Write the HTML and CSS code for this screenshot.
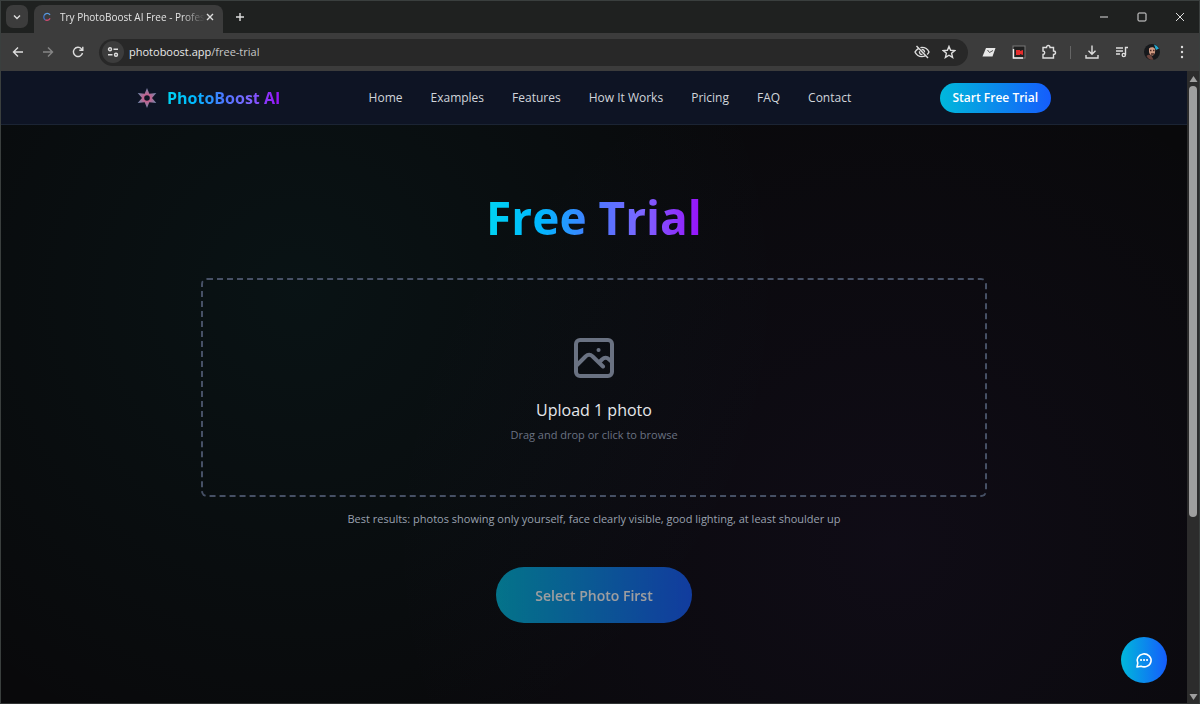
FILE: index.html
```html
<!DOCTYPE html>
<html lang="en">
<head>
  <meta charset="utf-8">
  <title>Try PhotoBoost AI Free</title>
  <link rel="stylesheet" href="styles.css">
</head>
<body>
  <div class="window">
    <div class="tab-strip">
      <button class="tab-search" aria-label="Search tabs">
        <svg width="10" height="10" viewBox="0 0 10 10"><path d="M2 3.5l3 3 3-3"/></svg>
      </button>
      <div class="tab">
        <svg class="favicon" width="10" height="10" viewBox="0 0 10 10">
          <path d="M8 3A3.2 3.2 0 0 0 2.2 3.4" stroke="#5a9be0"/>
          <path d="M2.2 3.4A3.2 3.2 0 0 0 3.4 7.8" stroke="#3f6fc4"/>
          <path d="M3.4 7.8A3.2 3.2 0 0 0 8 6.2" stroke="#c44a6c"/>
        </svg>
        <span class="tab-title">Try PhotoBoost AI Free - Profes</span>
        <button class="tab-close" aria-label="Close tab">
          <svg width="10" height="10" viewBox="0 0 10 10"><path d="M2 2l6 6M8 2L2 8"/></svg>
        </button>
      </div>
      <button class="new-tab" aria-label="New tab">
        <svg width="12" height="12" viewBox="0 0 12 12"><path d="M6 2v8M2 6h8"/></svg>
      </button>
      <div class="window-controls">
        <button aria-label="Minimize"><svg width="12" height="12" viewBox="0 0 12 12"><path d="M2 6h8"/></svg></button>
        <button aria-label="Maximize"><svg width="12" height="12" viewBox="0 0 12 12"><rect x="2" y="2" width="8" height="8" rx="1"/></svg></button>
        <button aria-label="Close"><svg width="12" height="12" viewBox="0 0 12 12"><path d="M2 2l8 8M10 2l-8 8"/></svg></button>
      </div>
    </div>

    <div class="toolbar">
      <button class="tool" aria-label="Back">
        <svg width="14" height="14" viewBox="0 0 14 14"><path d="M12 7H2.5M7 2.5L2.5 7 7 11.5"/></svg>
      </button>
      <button class="tool" aria-label="Forward" disabled>
        <svg width="14" height="14" viewBox="0 0 14 14"><path d="M2 7h9.5M7 2.5L11.5 7 7 11.5"/></svg>
      </button>
      <button class="tool" aria-label="Reload">
        <svg width="14" height="14" viewBox="0 0 14 14"><path d="M11.5 8A4.6 4.6 0 1 1 10.5 3.9L11.6 5M11.8 1.8V5.3H8.3"/></svg>
      </button>

      <div class="address-bar">
        <button class="site-info" aria-label="Site information">
          <svg width="12" height="12" viewBox="0 0 12 12"><circle cx="3" cy="3.3" r="1.5"/><path d="M6.5 3.3H11M1 8.7h4.5"/><circle cx="9" cy="8.7" r="1.5"/></svg>
        </button>
        <div class="url">photoboost.app<span>/free-trial</span></div>
        <button class="address-action" aria-label="Tracking blocked">
          <svg width="16" height="16" viewBox="0 0 16 16"><path d="M4.3 4.6C2.8 5.5 1.6 6.8 1 8c1.2 2.6 3.9 4.600 7 4.600 1.100 0 2.200-.3 3.200-.7M6.400 3.600C6.900 3.500 7.400 3.400 8 3.400c3.100 0 5.800 2 7 4.600-.4.900-1 1.800-1.900 2.500M2.500 2l11.500 12M7.600 5.500A2.500 2.500 0 0 1 10.500 8.400M5.600 7.300A2.500 2.500 0 0 0 8.500 10.500"/></svg>
        </button>
        <button class="address-action" aria-label="Bookmark">
          <svg width="14" height="14" viewBox="0 0 14 14"><path d="M7 1.400l1.600 3.900 4.200.3-3.200 2.700 1 4.100L7 10.200l-3.600 2.200 1-4.100L1.200 5.600l4.200-.3z"/></svg>
        </button>
      </div>

      <button class="tool" aria-label="Mail extension">
        <svg width="14" height="14" viewBox="0 0 14 14"><path d="M4 3h9.500l-3 8.500H.5z" fill="#e8e8e8" stroke="none"/><path d="M5.500 5l2 2.500L11 5.500" stroke="#555" stroke-width="1"/></svg>
      </button>
      <button class="tool" aria-label="Recorder extension">
        <svg width="14" height="14" viewBox="0 0 14 14"><rect x="1" y="1" width="12" height="12" fill="#202020" stroke="#777" stroke-width="1"/><path d="M1.500 4v9H11" stroke="#f0f0f0"/><path d="M4 5h4v1l3-1v5L8 9v1H4z" fill="#e52d2d" stroke="none"/></svg>
      </button>
      <button class="tool" aria-label="Extensions">
        <svg width="16" height="16" viewBox="0 0 16 16"><path d="M2 3.500h3.500C5.500.8 9 .8 9 3.500h3.500V7c2.700 0 2.700 3.500 0 3.500V14H2v-3.500c2.300-.2 2.300-3.300 0-3.500z"/></svg>
      </button>
      <span class="separator"></span>
      <button class="tool" aria-label="Downloads">
        <svg width="16" height="16" viewBox="0 0 16 16"><path d="M8 1.500V10M4.500 6.800L8 10.300l3.500-3.500M2 11v3h12v-3"/></svg>
      </button>
      <button class="tool" aria-label="Media controls">
        <svg width="16" height="16" viewBox="0 0 16 16"><path d="M2 4h7M2 7h7M2 10h4M11.500 11V3.500H14"/><circle cx="9.800" cy="11" r="1.600"/></svg>
      </button>
      <button class="tool" aria-label="Profile">
        <svg class="avatar" width="16" height="16" viewBox="0 0 16 16">
          <circle cx="8" cy="8" r="8" fill="#17191c"/>
          <path d="M10 .5a8 8 0 0 1 5 4L12 6z" fill="#25a8cf"/>
          <path d="M5 4.500c2-1.800 5-1.500 6 .5.500 2.500 0 5-2 6.500-2 .5-3.500-1-4-3.500z" fill="#d39b82"/>
          <path d="M6 6.500h1.500M9 6.500h1.500M7 10h3" stroke="#4a2a24"/>
          <path d="M2.500 12c2-2 3.500-1.500 5 0l2 3.500c-3 1-5.500-.5-7-3.500z" fill="#6b443d"/>
        </svg>
      </button>
      <button class="tool" aria-label="Menu">
        <svg width="14" height="14" viewBox="0 0 14 14"><g fill="#dedede" stroke="none"><circle cx="7" cy="2" r="1.200"/><circle cx="7" cy="7" r="1.200"/><circle cx="7" cy="12" r="1.200"/></g></svg>
      </button>
    </div>

    <div class="viewport">
      <div class="page">
        <header class="site-header">
          <div class="header-inner">
            <a class="brand" href="#">
              <svg width="20" height="20" viewBox="0 0 20 20">
                <defs>
                  <radialGradient id="star" cx="10" cy="10" r="10" gradientUnits="userSpaceOnUse">
                    <stop offset=".35" stop-color="#c2628e"/>
                    <stop offset="1" stop-color="#7089ad"/>
                  </radialGradient>
                </defs>
                <path fill="url(#star)" fill-rule="evenodd" d="M10 0l2.300 5.800 7-.8-4.300 5 4.300 5-7-.8L10 20l-2.300-5.800-7 .8L5 10 .7 5l7 .8zM10 7.200a2.800 2.800 0 1 0 0 5.600 2.800 2.800 0 0 0 0-5.600z"/>
              </svg>
              <span class="brand-name">PhotoBoost AI</span>
            </a>
            <nav class="nav">
              <a href="#">Home</a>
              <a href="#">Examples</a>
              <a href="#">Features</a>
              <a href="#">How It Works</a>
              <a href="#">Pricing</a>
              <a href="#">FAQ</a>
              <a href="#">Contact</a>
            </nav>
            <button class="trial-btn">Start Free Trial</button>
          </div>
        </header>

        <main class="trial">
          <h1>Free Trial</h1>
          <button class="dropzone">
            <svg width="40" height="40" viewBox="0 0 40 40">
              <rect x="2" y="2" width="36" height="36" rx="4"/>
              <path d="M2 28l9.500-9.500c2.400-2.300 4.800-2.300 7.200 0L29 28.500M25 24.500l3-3c2.400-2.300 4.800-2.300 7.200 0L38 24M24.500 12h.1"/>
            </svg>
            <span class="upload-title">Upload 1 photo</span>
            <span class="upload-hint">Drag and drop or click to browse</span>
          </button>
          <p class="tips">Best results: photos showing only yourself, face clearly visible, good lighting, at least shoulder up</p>
          <button class="submit-btn" disabled>Select Photo First</button>
        </main>

        <button class="chat-btn" aria-label="Open chat">
          <svg width="18" height="18" viewBox="0 0 18 18">
            <path d="M2 16l.8-3.800A7 6.500 0 1 1 6 15.200z"/>
            <path d="M6 9h.1M9 9h.1M12 9h.1" stroke-width="2"/>
          </svg>
        </button>
      </div>
      <div class="scrollbar">
        <svg width="9" height="8" viewBox="0 0 9 8"><path d="M4.500 1L8.500 7H.5z"/></svg>
        <div class="track"><div class="thumb"></div></div>
        <svg width="9" height="8" viewBox="0 0 9 8"><path d="M4.500 7L8.500 1H.5z"/></svg>
      </div>
    </div>
  </div>
</body>
</html>
```
FILE: styles.css
```css
* {
  box-sizing: border-box;
}

body {
  margin: 0;
  font-family: "Open Sans", "Noto Sans", sans-serif;
  font-size: 12px;
  background: #1f2120;
  color: #d1d5db;
}

button {
  padding: 0;
  border: none;
  background: none;
  color: inherit;
  font-family: inherit;
  cursor: pointer;
}

a {
  color: inherit;
  text-decoration: none;
}

svg {
  display: block;
  flex-shrink: 0;
  fill: none;
}

.window {
  display: flex;
  flex-direction: column;
  min-height: 100vh;
  border: 1px solid #3a3f3e;
  border-bottom-color: #303333;
}

/* Tab strip */
.tab-strip {
  display: flex;
  height: 32px;
  padding: 4px 0 0 5px;
  background: #1f2120;
}

.tab-strip svg,
.toolbar svg {
  stroke: #dedede;
  stroke-width: 1.4;
}

.tab-search {
  display: flex;
  align-items: center;
  justify-content: center;
  width: 22px;
  height: 23px;
  border-radius: 7px;
  background: #3c3c3c;
}

.tab {
  display: flex;
  align-items: center;
  width: 189px;
  margin-left: 6px;
  padding: 0 8px;
  border-radius: 8px 8px 0 0;
  background: #3c3c3c;
}

.tab-title {
  flex: 1;
  margin: 0 0 4px 8px;
  overflow: hidden;
  white-space: nowrap;
  font-size: 10px;
  line-height: 14px;
  color: #e3e3e3;
  -webkit-mask-image: linear-gradient(90deg, #000 84%, transparent);
  mask-image: linear-gradient(90deg, #000 84%, transparent);
}

.favicon,
.tab-close {
  margin-bottom: 4px;
}

.new-tab {
  display: flex;
  align-items: center;
  justify-content: center;
  width: 22px;
  height: 23px;
  margin-left: 6px;
}

.window-controls {
  display: flex;
  margin-left: auto;
}

.window-controls button {
  display: flex;
  align-items: center;
  justify-content: center;
  width: 38px;
  height: 23px;
}

.window-controls svg {
  stroke-width: 1;
}

/* Toolbar */
.toolbar {
  display: flex;
  align-items: center;
  height: 38px;
  padding: 0 2px;
  background: #3c3c3c;
}

.tool {
  display: flex;
  align-items: center;
  justify-content: center;
  width: 30px;
  height: 28px;
}

.tool:disabled {
  opacity: 0.45;
}

.toolbar .avatar {
  stroke: none;
}

.separator {
  width: 1px;
  height: 13px;
  margin: 0 6px;
  background: #656565;
}

.address-bar {
  display: flex;
  flex: 1;
  align-items: center;
  height: 27px;
  margin: 0 6px;
  padding: 0 6px 0 3px;
  border-radius: 14px;
  background: #282828;
}

.site-info {
  display: flex;
  align-items: center;
  justify-content: center;
  width: 22px;
  height: 22px;
  border-radius: 50%;
  background: #3c3c3c;
}

.url {
  flex: 1;
  margin-left: 5px;
  font-size: 11px;
  line-height: 16px;
  color: #e8e8e8;
}

.url span {
  color: #c7c7c7;
}

.address-action {
  display: flex;
  align-items: center;
  justify-content: center;
  width: 27px;
  height: 27px;
}

/* Page */
.viewport {
  display: flex;
  flex: 1;
}

.page {
  position: relative;
  flex: 1;
  background:
    radial-gradient(circle at 25% 35%, rgba(0, 200, 200, 0.05), transparent 50%),
    radial-gradient(circle at 75% 75%, rgba(120, 60, 200, 0.06), transparent 50%),
    #09090b;
}

.site-header {
  padding: 0 24px;
  border-bottom: 1px solid #1b2434;
  background: #0e1424;
}

.header-inner {
  display: flex;
  align-items: center;
  justify-content: space-between;
  max-width: 914px;
  height: 53px;
  margin: 0 auto;
}

.brand {
  display: flex;
  align-items: center;
  gap: 10px;
}

.brand-name,
h1 {
  background: linear-gradient(90deg, #00d3f2, #00b8ff 25%, #4a78ff 50%, #7c66ff 72%, #9810fa);
  -webkit-background-clip: text;
  background-clip: text;
  color: transparent;
}

.brand-name {
  font-size: 16px;
  font-weight: 700;
  line-height: 24px;
}

.nav {
  display: flex;
  gap: 28px;
  line-height: 20px;
}

.trial-btn {
  height: 30px;
  padding: 0 13px;
  border-radius: 15px;
  background: linear-gradient(90deg, #00b8db, #155dfc);
  color: #fff;
  font-size: 12px;
  font-weight: 600;
}

.trial {
  display: flex;
  flex-direction: column;
  align-items: center;
  max-width: 834px;
  margin: 0 auto;
  padding: 58px 24px 64px;
}

h1 {
  margin: 0 0 27px;
  font-size: 46px;
  font-weight: 700;
  line-height: 68px;
}

.dropzone {
  display: flex;
  flex-direction: column;
  align-items: center;
  width: 100%;
  padding: 58px 24px 51px;
  border: 2px dashed #465065;
  border-radius: 6px;
}

.dropzone svg {
  stroke: #6a7282;
  stroke-width: 4;
  stroke-linecap: round;
  stroke-linejoin: round;
}

.upload-title {
  margin-top: 20px;
  font-size: 16px;
  line-height: 24px;
  color: #e5e7eb;
}

.upload-hint {
  margin-top: 4px;
  font-size: 11px;
  line-height: 18px;
  color: #6a7282;
}

.tips {
  margin: 12px 0 38px;
  font-size: 11px;
  line-height: 20px;
  text-align: center;
  color: #99a1af;
}

.submit-btn {
  height: 56px;
  padding: 0 39px;
  border-radius: 28px;
  background: linear-gradient(90deg, #00b8db, #155dfc);
  color: #fff;
  font-size: 14px;
  font-weight: 600;
  opacity: 0.6;
}

.chat-btn {
  position: absolute;
  right: 20px;
  bottom: 20px;
  display: flex;
  align-items: center;
  justify-content: center;
  width: 46px;
  height: 46px;
  border-radius: 50%;
  background: linear-gradient(90deg, #00b8db, #155dfc);
}

.chat-btn svg {
  stroke: #fff;
  stroke-width: 1.6;
  stroke-linecap: round;
  stroke-linejoin: round;
}

.scrollbar {
  display: flex;
  flex-direction: column;
  align-items: center;
  width: 12px;
  padding: 4px 0 2px;
  background: #2c2c2c;
}

.scrollbar svg {
  fill: #9f9f9f;
}

.track {
  flex: 1;
  width: 8px;
  padding-top: 3px;
}

.thumb {
  height: 71%;
  border-radius: 4px;
  background: #9f9f9f;
}
```
